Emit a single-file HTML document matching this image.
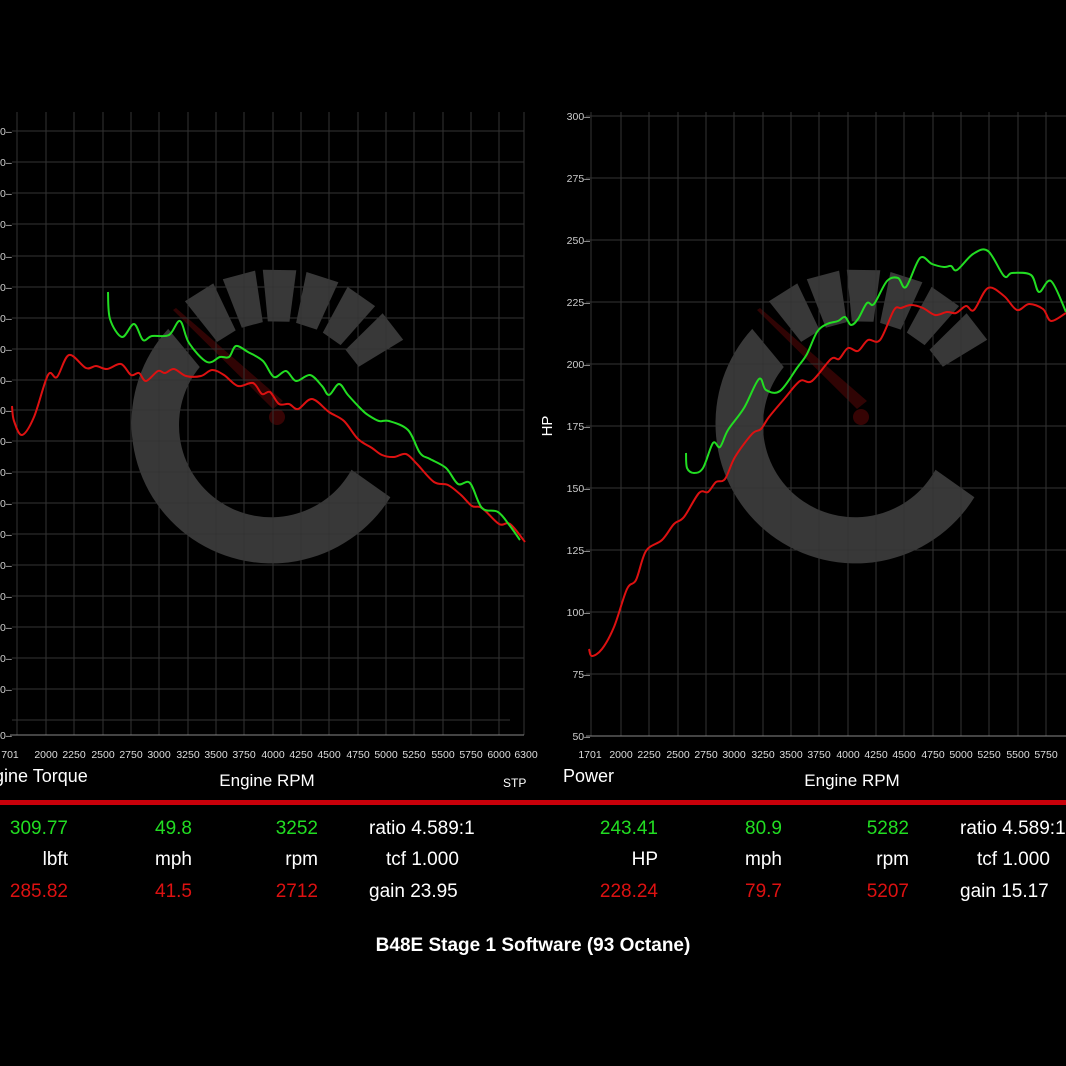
<!DOCTYPE html>
<html><head><meta charset="utf-8"><style>
html,body{margin:0;padding:0;background:#000;}
svg{display:block}
text{font-family:"Liberation Sans",Arial,sans-serif;}
</style></head><body>
<svg id="s" width="1066" height="1066" viewBox="0 0 1066 1066" xmlns="http://www.w3.org/2000/svg">
<rect width="1066" height="1066" fill="#000"/>
<defs>
<g id="logo">
  <path d="M113.4,80.3 A140,140 0 1 1 -108.8,-88.1 L-77.2,-50 A92,92 0 1 0 74.5,52.8 Z" fill="#383838"/>
  <g fill="#383838">
    <polygon points="-92.1,-115.8 -63.7,-133.6 -41.3,-86.6 -59.8,-75.1"/>
    <polygon points="-54.2,-137.7 -21.9,-146.4 -14.2,-94.9 -35.2,-89.3"/>
    <polygon points="-14.2,-147.3 19.3,-146.7 12.5,-95.2 -9.2,-95.6"/>
    <polygon points="29.5,-145 61.4,-134.7 39.8,-87.4 19.1,-94.1"/>
    <polygon points="70.6,-130.1 98.1,-110.9 63.6,-71.9 45.8,-84.4"/>
    <polygon points="105.6,-103.7 126.2,-77.3 81.8,-50.2 68.5,-67.3"/>
  </g>
  <polygon points="-104,-107 -4,-8 6,-16 -101,-109" fill="#6a0808" opacity="0.45"/>
  <circle cx="0" cy="0" r="8" fill="#5a0606" opacity="0.6"/>
</g>
</defs>

<use href="#logo" transform="translate(277,417)"/>
<use href="#logo" transform="translate(861,417)"/>

<!-- LEFT CHART GRID -->
<g stroke="#333" stroke-width="1">
  <line x1="12" y1="131" x2="524" y2="131"/><line x1="12" y1="162" x2="524" y2="162"/>
  <line x1="12" y1="193" x2="524" y2="193"/><line x1="12" y1="224" x2="524" y2="224"/>
  <line x1="12" y1="256" x2="524" y2="256"/><line x1="12" y1="287" x2="524" y2="287"/>
  <line x1="12" y1="318" x2="524" y2="318"/><line x1="12" y1="349" x2="524" y2="349"/>
  <line x1="12" y1="380" x2="524" y2="380"/><line x1="12" y1="410" x2="524" y2="410"/>
  <line x1="12" y1="441" x2="524" y2="441"/><line x1="12" y1="472" x2="524" y2="472"/>
  <line x1="12" y1="503" x2="524" y2="503"/><line x1="12" y1="534" x2="524" y2="534"/>
  <line x1="12" y1="565" x2="524" y2="565"/><line x1="12" y1="596" x2="524" y2="596"/>
  <line x1="12" y1="627" x2="524" y2="627"/><line x1="12" y1="658" x2="524" y2="658"/>
  <line x1="12" y1="689" x2="524" y2="689"/><line x1="12" y1="720" x2="510" y2="720"/>
  <line x1="17" y1="112" x2="17" y2="735"/><line x1="46" y1="112" x2="46" y2="735"/>
  <line x1="74" y1="112" x2="74" y2="735"/><line x1="103" y1="112" x2="103" y2="735"/>
  <line x1="131" y1="112" x2="131" y2="735"/><line x1="159" y1="112" x2="159" y2="735"/>
  <line x1="188" y1="112" x2="188" y2="735"/><line x1="216" y1="112" x2="216" y2="735"/>
  <line x1="244" y1="112" x2="244" y2="735"/><line x1="273" y1="112" x2="273" y2="735"/>
  <line x1="301" y1="112" x2="301" y2="735"/><line x1="329" y1="112" x2="329" y2="735"/>
  <line x1="358" y1="112" x2="358" y2="735"/><line x1="386" y1="112" x2="386" y2="735"/>
  <line x1="414" y1="112" x2="414" y2="735"/><line x1="443" y1="112" x2="443" y2="735"/>
  <line x1="471" y1="112" x2="471" y2="735"/><line x1="499" y1="112" x2="499" y2="735"/>
  <line x1="524" y1="112" x2="524" y2="735"/>
</g>
<line x1="10" y1="735" x2="524" y2="735" stroke="#888" stroke-width="1"/>
<g fill="#ccc" font-size="10.5">
  <text x="0" y="135">0–</text><text x="0" y="166">0–</text><text x="0" y="197">0–</text><text x="0" y="228">0–</text>
  <text x="0" y="260">0–</text><text x="0" y="291">0–</text><text x="0" y="322">0–</text><text x="0" y="353">0–</text>
  <text x="0" y="384">0–</text><text x="0" y="414">0–</text><text x="0" y="445">0–</text><text x="0" y="476">0–</text>
  <text x="0" y="507">0–</text><text x="0" y="538">0–</text><text x="0" y="569">0–</text><text x="0" y="600">0–</text>
  <text x="0" y="631">0–</text><text x="0" y="662">0–</text><text x="0" y="693">0–</text><text x="0" y="739">0–</text>
</g>
<g fill="#ddd" font-size="10.5" text-anchor="middle">
  <text x="10" y="758">701</text><text x="46" y="758">2000</text><text x="74" y="758">2250</text><text x="103" y="758">2500</text>
  <text x="131" y="758">2750</text><text x="159" y="758">3000</text><text x="188" y="758">3250</text><text x="216" y="758">3500</text>
  <text x="244" y="758">3750</text><text x="273" y="758">4000</text><text x="301" y="758">4250</text><text x="329" y="758">4500</text>
  <text x="358" y="758">4750</text><text x="386" y="758">5000</text><text x="414" y="758">5250</text><text x="443" y="758">5500</text>
  <text x="471" y="758">5750</text><text x="499" y="758">6000</text><text x="526" y="758">6300</text>
</g>
<text x="-6" y="782" fill="#fff" font-size="18">gine Torque</text>
<text x="267" y="786" fill="#fff" font-size="17" text-anchor="middle">Engine RPM</text>
<text x="503" y="787" fill="#fff" font-size="12">STP</text>

<polyline class="c" fill="none" stroke="#dd1111" stroke-width="2" stroke-linejoin="round" points="12,406 14,421 22,435 34,417 48,375 57,377 69,355 86,368 96,366 107,369 121,364 131,375 139,373 146,381 158,371 165,373 174,369 186,376 201,376 212,370 224,375 238,386 253,383 262,394 270,392 279,404 289,404 298,409 312,399 329,412 344,421 358,439 372,448 382,455 394,457 406,454 417,464 434,482 448,485 461,495 472,506 482,508 499,524 510,524 525,542"/>
<polyline class="c" fill="none" stroke="#22dd22" stroke-width="2" stroke-linejoin="round" points="108,292 110,319 122,337 134,324 143,340 152,336 169,335 180,321 189,343 207,362 220,357 229,357 236,346 248,352 263,361 274,377 286,371 296,381 310,375 322,386 329,395 339,384 348,395 362,410 368,415 379,421 389,421 408,430 420,453 430,459 446,468 458,484 470,483 482,508 498,512 510,526 520,540"/>

<!-- RIGHT CHART -->
<g stroke="#333" stroke-width="1">
  <line x1="586" y1="116" x2="1066" y2="116"/><line x1="586" y1="178" x2="1066" y2="178"/>
  <line x1="586" y1="240" x2="1066" y2="240"/><line x1="586" y1="302" x2="1066" y2="302"/>
  <line x1="586" y1="364" x2="1066" y2="364"/><line x1="586" y1="426" x2="1066" y2="426"/>
  <line x1="586" y1="488" x2="1066" y2="488"/><line x1="586" y1="550" x2="1066" y2="550"/>
  <line x1="586" y1="612" x2="1066" y2="612"/><line x1="586" y1="674" x2="1066" y2="674"/>
  <line x1="591" y1="112" x2="591" y2="736"/><line x1="621" y1="112" x2="621" y2="736"/>
  <line x1="649" y1="112" x2="649" y2="736"/><line x1="678" y1="112" x2="678" y2="736"/>
  <line x1="706" y1="112" x2="706" y2="736"/><line x1="734" y1="112" x2="734" y2="736"/>
  <line x1="763" y1="112" x2="763" y2="736"/><line x1="791" y1="112" x2="791" y2="736"/>
  <line x1="819" y1="112" x2="819" y2="736"/><line x1="848" y1="112" x2="848" y2="736"/>
  <line x1="876" y1="112" x2="876" y2="736"/><line x1="904" y1="112" x2="904" y2="736"/>
  <line x1="933" y1="112" x2="933" y2="736"/><line x1="961" y1="112" x2="961" y2="736"/>
  <line x1="989" y1="112" x2="989" y2="736"/><line x1="1018" y1="112" x2="1018" y2="736"/>
  <line x1="1046" y1="112" x2="1046" y2="736"/>
</g>
<line x1="586" y1="736" x2="1066" y2="736" stroke="#888" stroke-width="1"/>
<g fill="#ccc" font-size="10.5" text-anchor="end">
  <text x="590" y="120">300–</text><text x="590" y="182">275–</text><text x="590" y="244">250–</text>
  <text x="590" y="306">225–</text><text x="590" y="368">200–</text><text x="590" y="430">175–</text>
  <text x="590" y="492">150–</text><text x="590" y="554">125–</text><text x="590" y="616">100–</text>
  <text x="590" y="678">75–</text><text x="590" y="740">50–</text>
</g>
<g fill="#ddd" font-size="10.5" text-anchor="middle">
  <text x="590" y="758">1701</text><text x="621" y="758">2000</text><text x="649" y="758">2250</text>
  <text x="678" y="758">2500</text><text x="706" y="758">2750</text><text x="734" y="758">3000</text><text x="763" y="758">3250</text>
  <text x="791" y="758">3500</text><text x="819" y="758">3750</text><text x="848" y="758">4000</text><text x="876" y="758">4250</text>
  <text x="904" y="758">4500</text><text x="933" y="758">4750</text><text x="961" y="758">5000</text><text x="989" y="758">5250</text>
  <text x="1018" y="758">5500</text><text x="1046" y="758">5750</text><text x="1072" y="758">6</text>
</g>
<text x="552" y="426" fill="#fff" font-size="15" text-anchor="middle" transform="rotate(-90 552 426)">HP</text>
<text x="563" y="782" fill="#fff" font-size="18">Power</text>
<text x="852" y="786" fill="#fff" font-size="17" text-anchor="middle">Engine RPM</text>

<polyline class="c" fill="none" stroke="#dd1111" stroke-width="2" stroke-linejoin="round" points="589,649 592,656 602,649 614,627 627,589 636,580 646,551 662,540 674,524 684,517 699,493 708,492 716,482 725,479 735,457 752,434 761,429 769,417 785,398 800,381 812,381 831,359 839,359 848,348 858,351 868,340 880,340 894,310 901,308 911,305 923,308 935,315 947,312 956,313 966,306 974,310 988,288 1004,296 1017,310 1029,304 1043,309 1051,321 1066,313"/>
<polyline class="c" fill="none" stroke="#22dd22" stroke-width="2" stroke-linejoin="round" points="686,453 687,468 694,473 703,468 713,443 720,447 728,430 744,408 759,379 766,390 780,391 797,368 807,354 817,332 827,324 838,321 845,317 851,325 858,319 867,303 874,304 887,281 898,278 906,287 920,258 932,264 944,267 951,266 957,270 973,254 988,251 1004,276 1012,273 1031,275 1039,292 1051,281 1066,312"/>

<!-- RED BAND -->
<rect x="0" y="800" width="1066" height="5" fill="#c8000a"/>

<g font-size="19">
  <g text-anchor="end" fill="#22dd22">
    <text x="68" y="834">309.77</text><text x="192" y="834">49.8</text><text x="318" y="834">3252</text>
    <text x="658" y="834">243.41</text><text x="782" y="834">80.9</text><text x="909" y="834">5282</text>
  </g>
  <g text-anchor="end" fill="#fff">
    <text x="68" y="865">lbft</text><text x="192" y="865">mph</text><text x="318" y="865">rpm</text>
    <text x="658" y="865">HP</text><text x="782" y="865">mph</text><text x="909" y="865">rpm</text>
  </g>
  <g text-anchor="end" fill="#dd1111">
    <text x="68" y="897">285.82</text><text x="192" y="897">41.5</text><text x="318" y="897">2712</text>
    <text x="658" y="897">228.24</text><text x="782" y="897">79.7</text><text x="909" y="897">5207</text>
  </g>
  <g fill="#fff">
    <text x="369" y="834">ratio 4.589:1</text><text x="386" y="865">tcf 1.000</text><text x="369" y="897">gain 23.95</text>
    <text x="960" y="834">ratio 4.589:1</text><text x="977" y="865">tcf 1.000</text><text x="960" y="897">gain 15.17</text>
  </g>
</g>
<text x="533" y="951" fill="#fff" font-size="19" font-weight="bold" text-anchor="middle">B48E Stage 1 Software (93 Octane)</text>
</svg>
<script>
(function(){
  var ns="http://www.w3.org/2000/svg";
  var pls=document.querySelectorAll("polyline.c");
  for(var k=0;k<pls.length;k++){
    var pl=pls[k];
    var pts=pl.getAttribute("points").trim().split(/\s+/).map(function(s){var a=s.split(",");return [+a[0],+a[1]];});
    var d="M"+pts[0][0]+","+pts[0][1];
    for(var i=0;i<pts.length-1;i++){
      var p0=pts[i-1]||pts[i],p1=pts[i],p2=pts[i+1],p3=pts[i+2]||p2;
      var c1x=p1[0]+(p2[0]-p0[0])/6,c1y=p1[1]+(p2[1]-p0[1])/6;
      var c2x=p2[0]-(p3[0]-p1[0])/6,c2y=p2[1]-(p3[1]-p1[1])/6;
      d+=" C"+c1x.toFixed(1)+","+c1y.toFixed(1)+" "+c2x.toFixed(1)+","+c2y.toFixed(1)+" "+p2[0]+","+p2[1];
    }
    var p=document.createElementNS(ns,"path");
    p.setAttribute("d",d);p.setAttribute("fill","none");
    p.setAttribute("stroke",pl.getAttribute("stroke"));p.setAttribute("stroke-width","2");
    pl.parentNode.replaceChild(p,pl);
  }
})();
</script>
</body></html>
